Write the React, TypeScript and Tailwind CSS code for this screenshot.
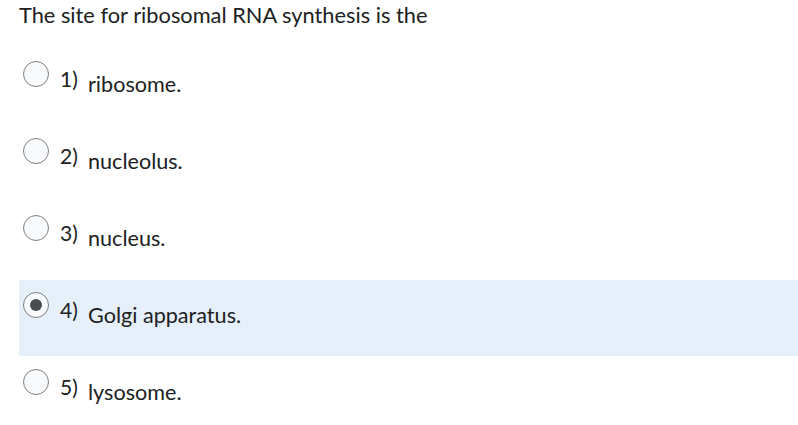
import React from "react";

const options = [
  { n: "1)", label: "ribosome." },
  { n: "2)", label: "nucleolus." },
  { n: "3)", label: "nucleus." },
  { n: "4)", label: "Golgi apparatus.", selected: true },
  { n: "5)", label: "lysosome." },
];

export default function App() {
  return (
    <div className="w-[798px] h-[425px] bg-white pl-[19px] text-[#202122]" style={{ fontFamily: "Lato, 'Noto Sans', sans-serif" }}>
      <div className="pt-[1px] h-[49px] text-[21.8px] leading-[28px]">The site for ribosomal RNA synthesis is the</div>
      <div className="flex flex-col gap-[1px]">
        {options.map((o) => (
          <div key={o.n} className={`flex items-start h-[76px] ${o.selected ? "bg-[#e6f0fa]" : ""}`}>
            <div className="mt-[12px] ml-[4px] w-[26px] h-[26px] rounded-full border border-[#7c7f82] bg-[#f9fafb] flex items-center justify-center shrink-0">
              {o.selected && <div className="w-[12px] h-[12px] rounded-full bg-[#494c4e]" />}
            </div>
            <div className="ml-[11px] mt-[16px] text-[21px] leading-[28px] w-[28px]">{o.n}</div>
            <div className="mt-[21px] text-[21.6px] leading-[28px]">{o.label}</div>
          </div>
        ))}
      </div>
    </div>
  );
}
